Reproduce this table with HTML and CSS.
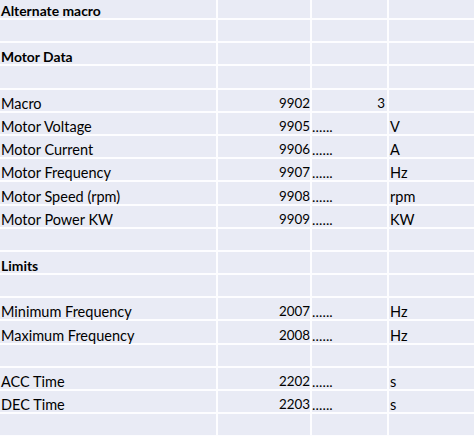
FILE: index.html
```html
<!DOCTYPE html>
<html>
<head>
<meta charset="utf-8">
<link rel="stylesheet" href="styles.css">
</head>
<body>
<div class="sheet">
  <div class="c b">Alternate macro</div><div class="c"></div><div class="c"></div><div class="c"></div>
  <div class="c"></div><div class="c"></div><div class="c"></div><div class="c"></div>
  <div class="c b">Motor Data</div><div class="c"></div><div class="c"></div><div class="c"></div>
  <div class="c"></div><div class="c"></div><div class="c"></div><div class="c"></div>
  <div class="c">Macro</div><div class="c num">9902</div><div class="c val">3</div><div class="c"></div>
  <div class="c">Motor Voltage</div><div class="c num">9905</div><div class="c dots">......</div><div class="c unit">V</div>
  <div class="c">Motor Current</div><div class="c num">9906</div><div class="c dots">......</div><div class="c unit">A</div>
  <div class="c">Motor Frequency</div><div class="c num">9907</div><div class="c dots">......</div><div class="c unit">Hz</div>
  <div class="c">Motor Speed (rpm)</div><div class="c num">9908</div><div class="c dots">......</div><div class="c unit">rpm</div>
  <div class="c">Motor Power KW</div><div class="c num">9909</div><div class="c dots">......</div><div class="c unit">KW</div>
  <div class="c"></div><div class="c"></div><div class="c"></div><div class="c"></div>
  <div class="c b">Limits</div><div class="c"></div><div class="c"></div><div class="c"></div>
  <div class="c"></div><div class="c"></div><div class="c"></div><div class="c"></div>
  <div class="c">Minimum Frequency</div><div class="c num">2007</div><div class="c dots">......</div><div class="c unit">Hz</div>
  <div class="c">Maximum Frequency</div><div class="c num">2008</div><div class="c dots">......</div><div class="c unit">Hz</div>
  <div class="c"></div><div class="c"></div><div class="c"></div><div class="c"></div>
  <div class="c">ACC Time</div><div class="c num">2202</div><div class="c dots">......</div><div class="c unit">s</div>
  <div class="c">DEC Time</div><div class="c num">2203</div><div class="c dots">......</div><div class="c unit">s</div>
  <div class="c"></div><div class="c"></div><div class="c"></div><div class="c"></div>
</div>
</body>
</html>
```
FILE: styles.css
```css
html, body {
  margin: 0;
  padding: 0;
  background: #ffffff;
}
.sheet {
  width: 474px;
  height: 436px;
  display: grid;
  grid-template-columns: 216px 92px 75px 1fr;
  grid-template-rows: 18px repeat(18, 21.2px);
  gap: 2px;
  background: #fdfdff;
  font-family: Lato, "Open Sans", sans-serif;
  font-size: 14.5px;
  color: #000000;
  overflow: hidden;
}
.c {
  background: #e9ebf5;
  display: flex;
  align-items: flex-end;
  line-height: 15px;
  padding-bottom: 0;
  padding-left: 1px;
  white-space: nowrap;
}
.b {
  font-weight: bold;
  font-size: 13.9px;
}
.num {
  justify-content: flex-end;
  padding-left: 0;
  padding-right: 0;
  font-size: 13.4px;
}
.val {
  justify-content: flex-end;
  padding-right: 2px;
  font-size: 13.4px;
}
.dots {
  padding-left: 0;
  font-size: 14.3px;
  letter-spacing: 0.1px;
}
.unit {
  padding-left: 1px;
}
```
